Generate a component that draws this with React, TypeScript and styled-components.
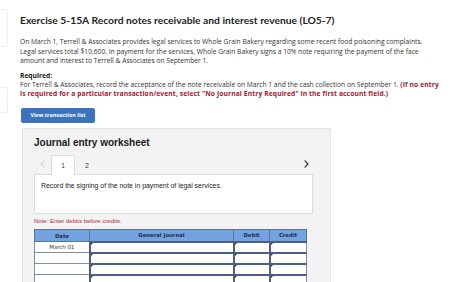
import React from 'react';
import styled, { createGlobalStyle } from 'styled-components';

const GlobalStyle = createGlobalStyle`
  html, body {
    margin: 0;
    padding: 0;
    background: #ffffff;
  }
  body {
    font-family: 'Open Sans', Lato, sans-serif;
    color: #333333;
    overflow: hidden;
  }
`;

const Page = styled.div`
  display: flex;
  width: 474px;
  height: 282px;
  overflow: hidden;
`;

const Rail = styled.div`
  width: 8px;
  display: flex;
  flex-direction: column;
  padding-top: 9px;
  gap: 40px;
`;

const RailMark = styled.div<{ h: number }>`
  height: ${({ h }) => h}px;
  border: 1px solid #f0f0f0;
  border-left: none;
  border-radius: 0 2px 2px 0;
`;

const Main = styled.div`
  flex: 1;
  padding: 14px 0 0 12px;
`;

const Title = styled.h1`
  margin: 0 0 11px 0;
  font-family: Lato, 'Open Sans', sans-serif;
  font-size: 10.3px;
  line-height: 12px;
  font-weight: 700;
  color: #222222;
`;

const Para = styled.p`
  margin: 0 0 6px 0;
  font-size: 6.7px;
  line-height: 9.6px;
  color: #333333;
`;

const Label = styled.div`
  font-size: 6.7px;
  line-height: 8px;
  font-weight: 700;
  color: #222222;
`;

const Alert = styled.span`
  color: #a3162d;
  font-weight: 700;
  letter-spacing: 0.12px;
`;

const Button = styled.button`
  display: block;
  margin: 9px 0 5px 1px;
  width: 74px;
  height: 15px;
  padding: 0;
  border: none;
  border-radius: 2px;
  background: #3b73bf;
  color: #ffffff;
  font-family: 'Open Sans', sans-serif;
  font-size: 5.4px;
  font-weight: 700;
`;

const Panel = styled.div`
  margin-left: 2px;
  width: 309px;
  height: 160px;
  background: #f3f3f3;
  border: 1px solid #e4e4e4;
  border-bottom: none;
  padding: 8px 0 0 11px;
  box-sizing: border-box;
`;

const PanelTitle = styled.h2`
  margin: 0 0 6px 0;
  font-family: 'Liberation Sans', Arial, sans-serif;
  font-size: 10px;
  line-height: 12px;
  font-weight: 700;
  color: #1a1a1a;
`;

const TabBar = styled.div`
  display: flex;
  align-items: stretch;
  width: 281px;
  height: 19px;
`;

const Arrow = styled.span`
  width: 17px;
  display: flex;
  align-items: center;
  justify-content: center;
`;

const Tab = styled.div<{ active?: boolean }>`
  width: 24px;
  display: flex;
  align-items: center;
  justify-content: center;
  font-family: 'Liberation Sans', Arial, sans-serif;
  font-size: 6.5px;
  color: #333333;
  background: ${({ active }) => (active ? '#ffffff' : 'transparent')};
  border: 1px solid ${({ active }) => (active ? '#dcdcdc' : 'transparent')};
  border-bottom: none;
  box-sizing: border-box;
  position: relative;
  z-index: 1;
  margin-bottom: -1px;
`;

const Spacer = styled.div`
  flex: 1;
`;

const ContentBox = styled.div`
  width: 279px;
  height: 40px;
  background: #ffffff;
  border: 1px solid #dcdcdc;
  box-sizing: border-box;
  padding: 7px 0 0 6px;
  font-family: 'Liberation Sans', Arial, sans-serif;
  font-size: 6.9px;
  color: #222222;
`;

const Note = styled.div`
  margin: 4px 0 5px 0;
  font-family: 'Liberation Sans', Arial, sans-serif;
  font-size: 6px;
  color: #b0283e;
`;

const Table = styled.table`
  border-collapse: collapse;
  width: 268px;
  table-layout: fixed;
  font-family: 'DejaVu Sans', Verdana, sans-serif;
`;

const Th = styled.th<{ w: number }>`
  width: ${({ w }) => w}px;
  height: 11px;
  padding: 0;
  background: #72a3e0;
  border: 1px solid #5b7598;
  font-size: 5.3px;
  font-weight: 700;
  color: #1d2f4c;
  text-align: center;
`;

const Td = styled.td<{ input?: boolean }>`
  height: 9px;
  padding: 0;
  background: #ffffff;
  border: 1px solid #7d8ea6;
  border-top-width: ${({ input }) => (input ? '2px' : '1px')};
  border-top-color: ${({ input }) => (input ? '#4c5f7c' : '#7d8ea6')};
  border-left-width: ${({ input }) => (input ? '2px' : '1px')};
  border-left-color: ${({ input }) => (input ? '#4c5f7c' : '#7d8ea6')};
  font-size: 5.4px;
  color: #333333;
  text-align: center;
  position: relative;
  &::before {
    content: '';
    display: ${({ input }) => (input ? 'block' : 'none')};
    position: absolute;
    left: 0;
    top: 0;
    border-top: 2px solid #203656;
    border-right: 2px solid transparent;
  }
`;

const Chevron = ({ dir, color, weight }: { dir: 'left' | 'right'; color: string; weight: number }) => (
  <svg width="5" height="8" viewBox="0 0 5 8">
    <path
      d={dir === 'left' ? 'M4 0.8 L1 4 L4 7.2' : 'M1 0.8 L4 4 L1 7.2'}
      fill="none"
      stroke={color}
      strokeWidth={weight}
      strokeLinecap="round"
      strokeLinejoin="round"
    />
  </svg>
);

const rows = ['March 01', '', '', ''];

export default function App() {
  return (
    <>
      <GlobalStyle />
      <Page>
        <Rail>
          <RailMark h={36} />
          <RailMark h={24} />
        </Rail>
        <Main>
          <Title>Exercise 5-15A Record notes receivable and interest revenue (LO5-7)</Title>
          <Para>
            On March 1, Terrell &amp; Associates provides legal services to Whole Grain Bakery regarding some recent food poisoning complaints.
            <br />
            Legal services total $10,600. In payment for the services, Whole Grain Bakery signs a 10% note requiring the payment of the face
            <br />
            amount and interest to Terrell &amp; Associates on September 1.
          </Para>
          <Label>Required:</Label>
          <Para>
            For Terrell &amp; Associates, record the acceptance of the note receivable on March 1 and the cash collection on September 1.{' '}
            <Alert>(If no entry</Alert>
            <br />
            <Alert>is required for a particular transaction/event, select &quot;No Journal Entry Required&quot; in the first account field.)</Alert>
          </Para>
          <Button>View transaction list</Button>
          <Panel>
            <PanelTitle>Journal entry worksheet</PanelTitle>
            <TabBar>
              <Arrow>
                <Chevron dir="left" color="#b5b5b5" weight={0.8} />
              </Arrow>
              <Tab active>1</Tab>
              <Tab>2</Tab>
              <Spacer />
              <Arrow>
                <Chevron dir="right" color="#333333" weight={1.2} />
              </Arrow>
            </TabBar>
            <ContentBox>Record the signing of the note in payment of legal services.</ContentBox>
            <Note>Note: Enter debits before credits.</Note>
            <Table>
              <thead>
                <tr>
                  <Th w={54}>Date</Th>
                  <Th w={143}>General Journal</Th>
                  <Th w={35}>Debit</Th>
                  <Th w={36}>Credit</Th>
                </tr>
              </thead>
              <tbody>
                {rows.map((d, i) => (
                  <tr key={i}>
                    <Td>{d}</Td>
                    <Td input />
                    <Td input />
                    <Td input />
                  </tr>
                ))}
              </tbody>
            </Table>
          </Panel>
        </Main>
      </Page>
    </>
  );
}
